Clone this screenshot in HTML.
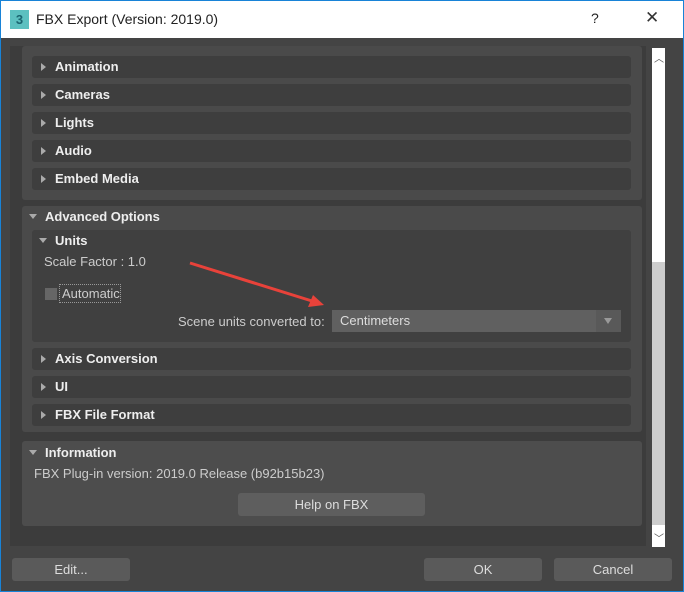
<!DOCTYPE html><html><head><style>
*{box-sizing:border-box;margin:0;padding:0}
body{width:684px;height:592px;background:#444;font-family:"Liberation Sans",sans-serif;position:relative;overflow:hidden;font-size:13px;color:#ddd}
.a{position:absolute}
.row{position:absolute;left:32px;width:599px;height:22px;background:#3e3e3e;border-radius:3px;font-weight:bold;color:#eee;font-size:13px;line-height:22px;padding-left:23px}
.tri{position:absolute;left:9px;top:7px;width:0;height:0;border-left:5px solid #aaa;border-top:4px solid transparent;border-bottom:4px solid transparent}
.trd{position:absolute;left:7px;top:8px;width:0;height:0;border-top:5px solid #aaa;border-left:4px solid transparent;border-right:4px solid transparent}
.grp{position:absolute;left:22px;width:620px;background:#4a4a4a;border-radius:3px}
.btn{position:absolute;height:23px;background:#5a5a5a;border-radius:3px;text-align:center;line-height:23px;color:#ddd;font-size:13px}
</style></head><body>
<div class="a" style="left:0;top:0;width:684px;height:38px;background:#fff;border-top:1px solid #1883d7"></div>
<div class="a" style="left:0;top:0;width:1px;height:592px;background:#1883d7"></div>
<div class="a" style="left:683px;top:0;width:1px;height:592px;background:#1883d7"></div>
<div class="a" style="left:0;top:591px;width:684px;height:1px;background:#1883d7"></div>
<div class="a" style="left:10px;top:10px;width:19px;height:19px;background:#5cc0c0;color:#1a6570;font-weight:bold;font-size:13px;text-align:center;line-height:19px">3</div>
<div class="a" style="left:36px;top:11px;color:#222;font-size:14px">FBX Export (Version: 2019.0)</div>
<div class="a" style="left:591px;top:10px;color:#222;font-size:14px">?</div>
<div class="a" style="left:645px;top:8px;color:#333;font-size:17px;font-family:'DejaVu Sans',sans-serif;font-weight:100">✕</div>
<div class="a" style="left:10px;top:46px;width:636px;height:500px;background:#3c3c3c"></div>
<div class="grp" style="top:46px;height:154px"></div>
<div class="row" style="top:56px"><span class="tri"></span>Animation</div>
<div class="row" style="top:84px"><span class="tri"></span>Cameras</div>
<div class="row" style="top:112px"><span class="tri"></span>Lights</div>
<div class="row" style="top:140px"><span class="tri"></span>Audio</div>
<div class="row" style="top:168px"><span class="tri"></span>Embed Media</div>
<div class="grp" style="top:206px;height:226px"></div>
<div class="a" style="left:22px;top:206px;width:300px;height:22px;font-weight:bold;color:#eee;font-size:13px;line-height:22px;padding-left:23px"><span class="trd"></span>Advanced Options</div>
<div class="a" style="left:32px;top:230px;width:599px;height:112px;background:#404040;border-radius:3px"></div>
<div class="a" style="left:32px;top:230px;width:200px;height:22px;font-weight:bold;color:#eee;font-size:13px;line-height:22px;padding-left:23px"><span class="trd"></span>Units</div>
<div class="a" style="left:44px;top:254px;color:#ccc">Scale Factor : 1.0</div>
<div class="a" style="left:45px;top:288px;width:12px;height:12px;background:#666"></div>
<div class="a" style="left:59px;top:284px;width:62px;height:19px;border:1px dotted #999;color:#ccc;line-height:17px;padding-left:2px">Automatic</div>
<div class="a" style="left:178px;top:314px;color:#ccc">Scene units converted to:</div>
<div class="a" style="left:332px;top:310px;width:289px;height:22px;background:#606060;color:#ddd;line-height:22px;padding-left:8px">Centimeters</div>
<div class="a" style="left:596px;top:310px;width:25px;height:22px;background:#595959"></div>
<div class="a" style="left:604px;top:318px;border-top:6px solid #999;border-left:4px solid transparent;border-right:4px solid transparent"></div>
<svg class="a" style="left:0;top:0" width="684" height="592"><line x1="190" y1="263" x2="312" y2="301" stroke="#e8423a" stroke-width="3"/><polygon points="324,305 308,307 313,295" fill="#e8423a"/></svg>
<div class="row" style="top:348px"><span class="tri"></span>Axis Conversion</div>
<div class="row" style="top:376px"><span class="tri"></span>UI</div>
<div class="row" style="top:404px"><span class="tri"></span>FBX File Format</div>
<div class="grp" style="top:441px;height:85px;background:#4d4d4d"></div>
<div class="a" style="left:22px;top:442px;width:300px;height:22px;font-weight:bold;color:#eee;font-size:13px;line-height:22px;padding-left:23px"><span class="trd"></span>Information</div>
<div class="a" style="left:34px;top:466px;color:#ccc">FBX Plug-in version: 2019.0 Release (b92b15b23)</div>
<div class="btn" style="left:238px;top:493px;width:187px;background:#5e5e5e">Help on FBX</div>
<div class="a" style="left:652px;top:48px;width:13px;height:499px;background:#fff"></div>
<div class="a" style="left:652px;top:262px;width:13px;height:263px;background:#cdcdcd"></div>
<div class="a" style="left:654px;top:50px;color:#555;font-size:10px">︿</div>
<div class="a" style="left:654px;top:530px;color:#555;font-size:10px">﹀</div>
<div class="btn" style="left:12px;top:558px;width:118px">Edit...</div>
<div class="btn" style="left:424px;top:558px;width:118px">OK</div>
<div class="btn" style="left:554px;top:558px;width:118px">Cancel</div>
</body></html>
